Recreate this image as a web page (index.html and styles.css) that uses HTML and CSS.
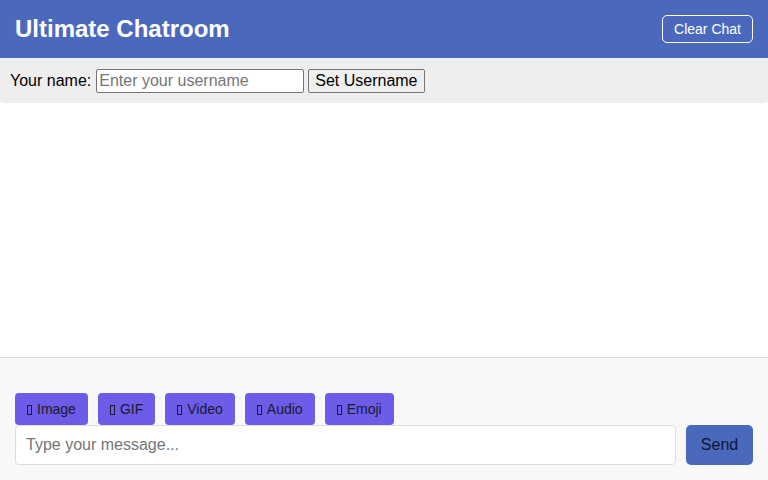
FILE: index.html
```html
<!DOCTYPE html>
<html>
<head>
<meta charset="utf-8">
<link rel="stylesheet" href="styles.css">
</head>
<body>
<div class="app">
  <header class="header">
    <h1 class="title">Ultimate Chatroom</h1>
    <button class="clear-btn">Clear Chat</button>
  </header>
  <div class="user-bar">
    <label class="user-label">Your name:</label>
    <input class="user-input" type="text" placeholder="Enter your username">
    <button class="user-btn">Set Username</button>
  </div>
  <main class="messages"></main>
  <footer class="composer">
    <div class="media-row">
      <button class="media-btn"><span class="tofu"></span>Image</button>
      <button class="media-btn"><span class="tofu"></span>GIF</button>
      <button class="media-btn"><span class="tofu"></span>Video</button>
      <button class="media-btn"><span class="tofu"></span>Audio</button>
      <button class="media-btn"><span class="tofu"></span>Emoji</button>
    </div>
    <div class="send-row">
      <input class="msg-input" type="text" placeholder="Type your message...">
      <button class="send-btn">Send</button>
    </div>
  </footer>
</div>
</body>
</html>
```
FILE: styles.css
```css
* { box-sizing: border-box; }
html, body { margin: 0; padding: 0; }
body {
  font-family: "Liberation Sans", Arial, sans-serif;
  background: #fff;
  width: 768px;
  height: 480px;
  overflow: hidden;
}
.app {
  display: flex;
  flex-direction: column;
  height: 480px;
}
.header {
  height: 58px;
  background: #4a69bd;
  display: flex;
  align-items: center;
  justify-content: space-between;
  padding: 0 15px;
}
.title {
  margin: 0;
  color: #fff;
  font-size: 24px;
  font-weight: bold;
}
.clear-btn {
  font-family: "Liberation Sans", Arial, sans-serif;
  background: transparent;
  color: #fff;
  border: 1px solid #fff;
  border-radius: 5px;
  font-size: 14px;
  height: 28px;
  padding: 0 11px;
}
.user-bar {
  height: 45px;
  background: #eeeeee;
  display: flex;
  align-items: center;
  padding: 1px 10px 0;
  border-radius: 0 0 5px 5px;
  box-shadow: 0 1px 3px rgba(0,0,0,0.08);
  font-size: 16px;
  color: #000;
}
.user-label { margin-right: 5px; }
.user-input {
  font-family: "Liberation Sans", Arial, sans-serif;
  font-size: 16px;
  width: 208px;
  height: 24px;
  padding: 1px 2px;
  border: 1px solid #767676;
  border-radius: 2px;
  background: #fff;
  margin: 0 4px 0 0;
}
.user-input::placeholder { color: #757575; }
.user-btn {
  font-family: "Liberation Sans", Arial, sans-serif;
  font-size: 16px;
  height: 24px;
  padding: 0 6px;
  border: 1px solid #767676;
  border-radius: 2px;
  background: #efefef;
  color: #000;
}
.messages {
  flex: 1;
  background: #fff;
}
.composer {
  height: 123px;
  background: #f8f8f8;
  border-top: 1px solid #dddddd;
  padding: 35px 15px 15px;
  display: flex;
  flex-direction: column;
}
.media-row {
  display: flex;
  gap: 10px;
}
.media-btn {
  font-family: "Liberation Sans", Arial, sans-serif;
  background: #6c5ce7;
  color: #1a1a2e;
  border: none;
  border-radius: 4px;
  font-size: 14px;
  height: 32px;
  padding: 0 12px;
}
.tofu {
  display: inline-block;
  width: 5px;
  height: 10px;
  border: 1px solid #1a1a2e;
  vertical-align: -1px;
  margin-right: 5px;
}
.send-row {
  display: flex;
  gap: 10px;
}
.msg-input {
  flex: 1;
  font-family: "Liberation Sans", Arial, sans-serif;
  font-size: 16px;
  height: 40px;
  padding: 0 10px;
  border: 1px solid #dddddd;
  border-radius: 4px;
  background: #fff;
}
.msg-input::placeholder { color: #757575; }
.send-btn {
  font-family: "Liberation Sans", Arial, sans-serif;
  font-size: 16px;
  width: 67px;
  height: 40px;
  background: #4a69bd;
  color: #0f1535;
  border: none;
  border-radius: 5px;
}
```
